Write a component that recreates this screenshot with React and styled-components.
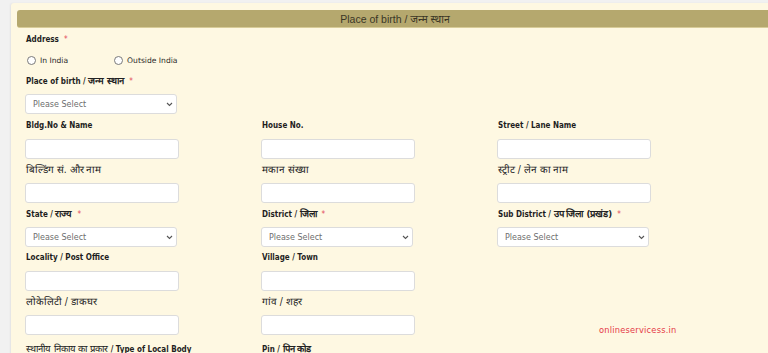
import styled, { createGlobalStyle } from 'styled-components'

const GlobalStyle = createGlobalStyle`
    html, body {
        margin: 0;
        padding: 0;
        background: #f1f1f1;
        overflow: hidden;
    }
    body {
        font-family: "Liberation Sans", Arial, sans-serif;
    }
`

const Page = styled.div`
    width: 768px;
    height: 353px;
    padding: 3px 0 0 11px;
    box-sizing: border-box;
    overflow: hidden;
`

const Panel = styled.div`
    width: 800px;
    height: 400px;
    background: #fef8e2;
    border-top-left-radius: 3px;
    box-shadow: -1px 0 2px rgba(0, 0, 0, 0.06);
    padding: 7px 0 0 6px;
    box-sizing: border-box;
`

const HeadBar = styled.div`
    width: 756px;
    height: 17px;
    background: #b5a86e;
    border-bottom: 1px solid #d8cc98;
    border-radius: 3px 0 0 3px;
    display: flex;
    align-items: center;
    justify-content: center;
    font-size: 10.5px;
    color: #3a3626;
    font-family: "Liberation Sans", "Noto Sans", sans-serif;
`

const Body = styled.div`
    padding: 5px 0 0 9px;
`

const Label = styled.div`
    height: 14px;
    line-height: 14px;
    font-family: "DejaVu Sans Condensed", "DejaVu Sans", Verdana, sans-serif;
    font-weight: ${p => (p.$hi ? 'normal' : 'bold')};
    font-size: 8px;
    color: #1e1e1e;
    white-space: nowrap;
    margin-top: ${p => p.$mt || 0}px;
`

const Hi = styled.span`
    font-size: ${p => (p.$big ? '10px' : '9.5px')};
    font-weight: ${p => (p.$light ? 'normal' : 'inherit')};
    color: #222;
`

const Star = styled.span`
    color: #e2495a;
    font-weight: normal;
    font-size: 8px;
    margin-left: 5px;
`

const RadioRow = styled.div`
    display: flex;
    align-items: center;
    height: 14px;
    margin: 6px 0 7px 1px;
    gap: 46px;
`

const RadioItem = styled.label`
    display: flex;
    align-items: center;
    gap: 4px;
    font-family: "DejaVu Sans", Verdana, sans-serif;
    font-size: 7.6px;
    color: #2a2a2a;
`

const Circle = styled.span`
    width: 7px;
    height: 7px;
    border: 1px solid #7a7a7a;
    border-radius: 50%;
    background: #fff;
`

const Grid = styled.div`
    display: grid;
    grid-template-columns: 236px 236px 236px;
`

const Field = styled.div`
    height: 44px;
`

const Control = styled.div`
    width: ${p => (p.$select ? '152px' : '154px')};
    height: 20px;
    margin-top: 6px;
    margin-left: -1px;
    background: #fff;
    border: 1px solid #dcdcdc;
    border-radius: 3px;
    box-sizing: border-box;
    display: flex;
    align-items: center;
    justify-content: space-between;
    padding: 0 3px 0 7px;
    font-family: "DejaVu Sans", Verdana, sans-serif;
    font-size: 8px;
    color: #6e6e6e;
`

const Watermark = styled.div`
    position: absolute;
    left: 599px;
    top: 325px;
    font-family: "DejaVu Sans", Verdana, sans-serif;
    font-size: 8.3px;
    color: #e53946;
    letter-spacing: 0.2px;
`

function Chevron() {
    return (
        <svg width="7" height="5" viewBox="0 0 7 5">
            <path d="M1 1 L3.5 3.5 L6 1" fill="none" stroke="#555" strokeWidth="1.1" />
        </svg>
    )
}

function Input({ select }) {
    return (
        <Control $select={select}>
            {select && <span>Please Select</span>}
            {select && <Chevron />}
        </Control>
    )
}

function FormField({ label, hi, hiText, req, select }) {
    return (
        <Field>
            <Label $hi={hi} $mt={1}>
                {hi ? <Hi $big>{label}</Hi> : label}
                {hiText && <Hi>{hiText}</Hi>}
                {req && <Star>*</Star>}
            </Label>
            <Input select={select} />
        </Field>
    )
}

const rows = [
    [
        { label: 'Bldg.No & Name' },
        { label: 'House No.' },
        { label: 'Street / Lane Name' },
    ],
    [
        { label: 'बिल्डिंग सं. और नाम', hi: true },
        { label: 'मकान संख्या', hi: true },
        { label: 'स्ट्रीट / लेन का नाम', hi: true },
    ],
    [
        { label: 'State / ', hiText: 'राज्य', req: true, select: true },
        { label: 'District / ', hiText: 'जिला', req: true, select: true },
        { label: 'Sub District / ', hiText: 'उप जिला (प्रखंड)', req: true, select: true },
    ],
    [
        { label: 'Locality / Post Office' },
        { label: 'Village / Town' },
        null,
    ],
    [
        { label: 'लोकेलिटी / डाकघर', hi: true },
        { label: 'गांव / शहर', hi: true },
        null,
    ],
]

function App() {
    return (
        <Page>
            <GlobalStyle />
            <Panel>
                <HeadBar>Place of birth / जन्म स्थान</HeadBar>
                <Body>
                    <Label>
                        Address<Star>*</Star>
                    </Label>
                    <RadioRow>
                        <RadioItem>
                            <Circle />
                            In India
                        </RadioItem>
                        <RadioItem>
                            <Circle />
                            Outside India
                        </RadioItem>
                    </RadioRow>
                    <Field>
                        <Label>
                            Place of birth / <Hi>जन्म स्थान</Hi>
                            <Star>*</Star>
                        </Label>
                        <Input select />
                    </Field>
                    <Grid>
                        {rows.flat().map((f, i) =>
                            f ? <FormField key={i} {...f} /> : <div key={i} />
                        )}
                        <Label $mt={4}>
                            <Hi $light>स्थानीय निकाय का प्रकार</Hi> / Type of Local Body
                        </Label>
                        <Label $mt={4}>
                            Pin / <Hi>पिन कोड</Hi>
                        </Label>
                    </Grid>
                </Body>
            </Panel>
            <Watermark>onlineservicess.in</Watermark>
        </Page>
    )
}

export default App
